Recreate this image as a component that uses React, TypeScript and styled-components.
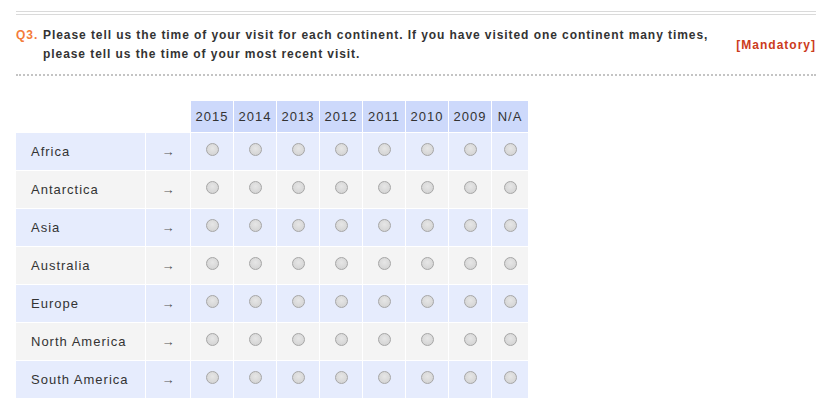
import styled, { createGlobalStyle } from "styled-components";

const GlobalStyle = createGlobalStyle`
	body {
		margin: 0;
		background: #fff;
		font-family: "Liberation Sans", Arial, sans-serif;
		color: #333;
	}
`;

const Page = styled.div`
	width: 800px;
	margin: 11px 0 0 16px;
`;

const QuestionBox = styled.div`
	border-top: 4px double #dadada;
	border-bottom: 2px dotted #c4c4c4;
	padding: 11px 0 10px;
	display: flex;
	align-items: center;
`;

const Number = styled.span`
	flex: 0 0 27px;
	align-self: flex-start;
	color: #f47b3a;
	font-size: 12px;
	font-weight: bold;
	letter-spacing: 1px;
	line-height: 19px;
`;

const QuestionText = styled.div`
	flex: 0 0 680px;
	font-size: 12px;
	font-weight: bold;
	letter-spacing: 0.93px;
	line-height: 19px;
	color: #333;
`;

const Mandatory = styled.span`
	margin-left: auto;
	color: #cc3b1c;
	font-size: 12px;
	font-weight: bold;
	letter-spacing: 1px;
`;

const Grid = styled.div`
	display: grid;
	grid-template-columns: 129px 44px repeat(7, 42px) 36px;
	grid-template-rows: 31px;
	grid-auto-rows: 37px;
	gap: 1px;
	margin-top: 25px;
	width: max-content;
`;

const Blank = styled.div``;

const HeadCell = styled.div`
	background: #cdd9fb;
	display: flex;
	align-items: center;
	justify-content: center;
	font-size: 13px;
	letter-spacing: 1px;
	color: #333;
`;

const Cell = styled.div<{ $odd: boolean }>`
	background: ${(p) => (p.$odd ? "#e6ecfd" : "#f4f4f4")};
	display: flex;
	align-items: center;
	justify-content: center;
`;

const LabelCell = styled(Cell)`
	justify-content: flex-start;
	padding-left: 15px;
	font-size: 13px;
	letter-spacing: 1px;
	color: #333;
`;

const Arrow = styled.span`
	font-size: 13px;
	color: #555;
`;

const Radio = styled.span`
	width: 11px;
	height: 11px;
	border-radius: 50%;
	border: 1px solid #a6a6a6;
	background: radial-gradient(circle at 50% 40%, #e6e6e6 0%, #d6d6d6 70%, #cfcfcf 100%);
	margin-top: -5px;
`;

const years = ["2015", "2014", "2013", "2012", "2011", "2010", "2009", "N/A"];
const continents = [
	"Africa",
	"Antarctica",
	"Asia",
	"Australia",
	"Europe",
	"North America",
	"South America",
];

export default function App() {
	return (
		<Page>
			<GlobalStyle />
			<QuestionBox>
				<Number>Q3.</Number>
				<QuestionText>
					Please tell us the time of your visit for each continent. If you have
					visited one continent many times, please tell us the time of your most
					recent visit.
				</QuestionText>
				<Mandatory>[Mandatory]</Mandatory>
			</QuestionBox>
			<Grid>
				<Blank />
				<Blank />
				{years.map((y) => (
					<HeadCell key={y}>{y}</HeadCell>
				))}
				{continents.map((c, i) => {
					const odd = i % 2 === 0;
					return [
						<LabelCell key={c} $odd={odd}>
							{c}
						</LabelCell>,
						<Cell key={c + "-arrow"} $odd={odd}>
							<Arrow>→</Arrow>
						</Cell>,
						...years.map((y) => (
							<Cell key={c + y} $odd={odd}>
								<Radio />
							</Cell>
						)),
					];
				})}
			</Grid>
		</Page>
	);
}
